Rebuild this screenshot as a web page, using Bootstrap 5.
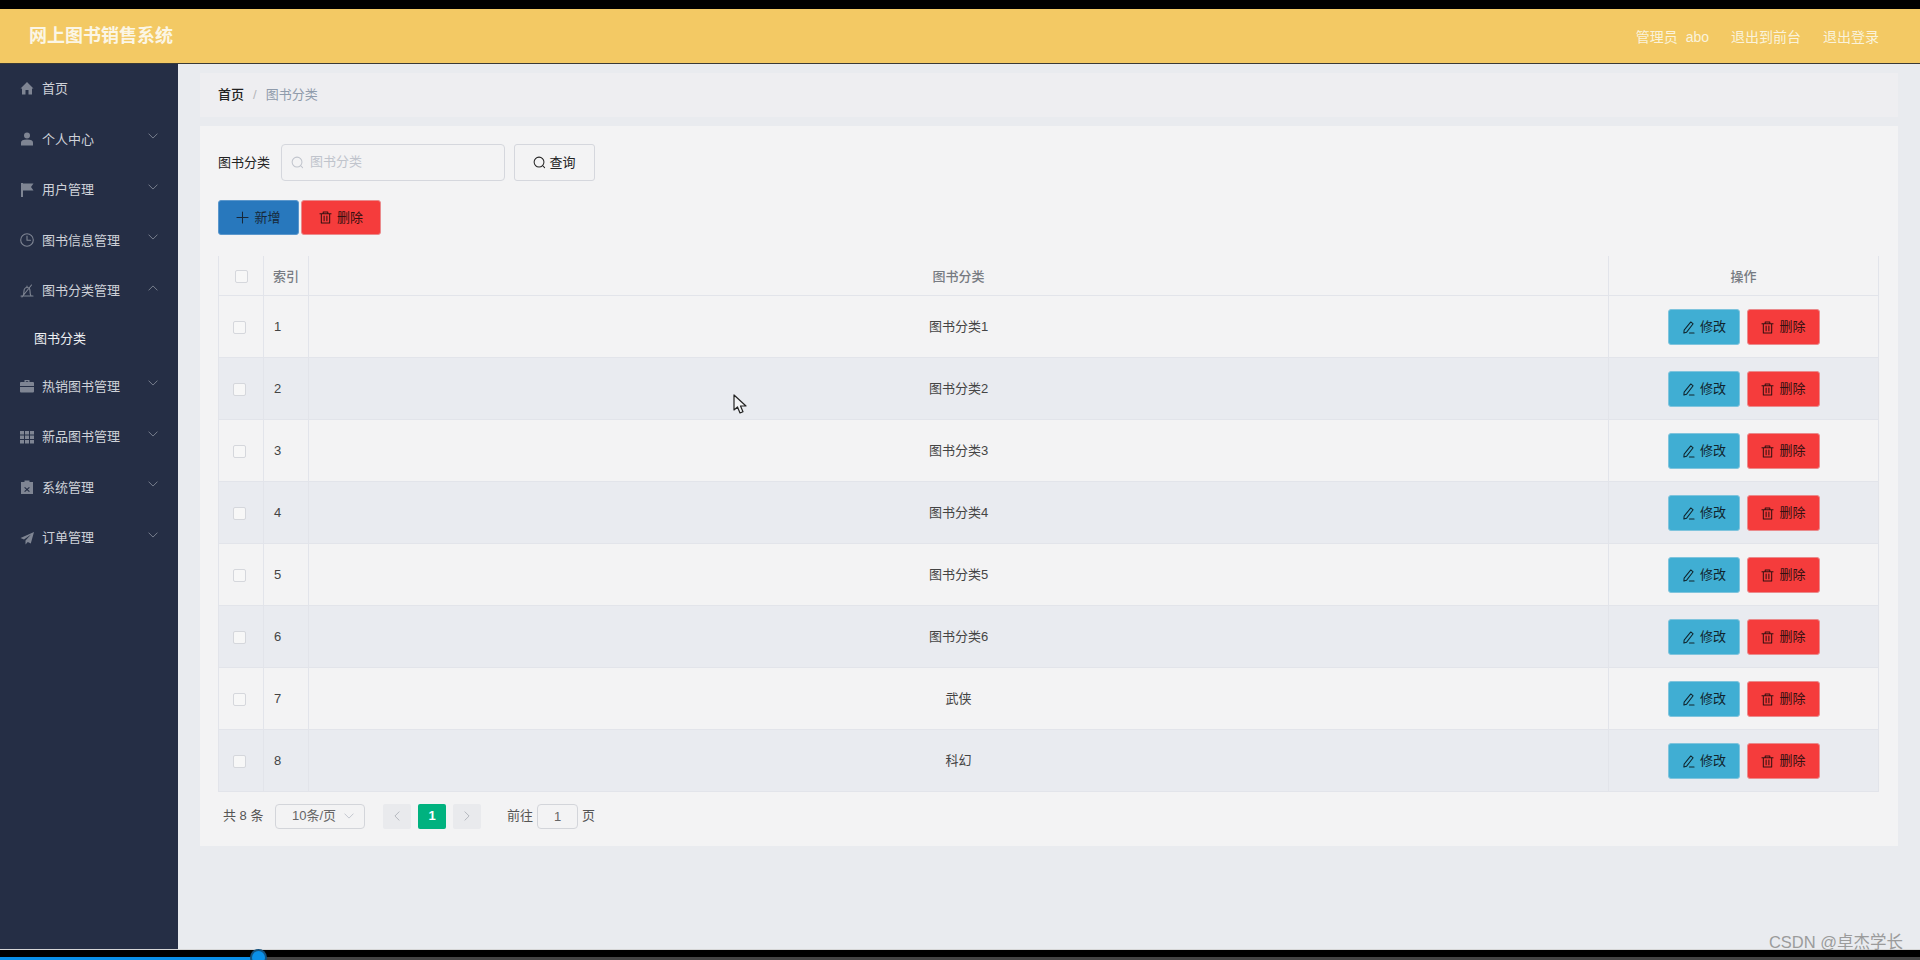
<!DOCTYPE html>
<html lang="zh">

<head>
    <meta charset="UTF-8" />
    <meta name="viewport" content="width=device-width, initial-scale=1" />
    <title>网上图书销售系统</title>
    <link href="https://cdn.jsdelivr.net/npm/bootstrap@5.3.2/dist/css/bootstrap.min.css" rel="stylesheet" />
    <style>
        html, body { height: 960px; overflow: hidden; }
        body { background: #000; font-family: "Liberation Sans", "Noto Sans CJK SC", sans-serif; font-size: 13px; color: #333; position: relative; }
        .ico { width: 14px; height: 14px; fill: currentColor; flex: none; }
        .ico-line { fill: none; stroke: currentColor; stroke-width: 1.1; stroke-linecap: round; stroke-linejoin: round; }

        .top-gap { height: 9px; }
        .app-head { height: 55px; background: #f3c964; border-bottom: 1px solid #3a3a36; padding: 0 41px 0 29px; }
        .app-title { font-size: 18px; font-weight: 700; color: #fbf6e6; line-height: 1; }
        .head-link { font-size: 14px; color: #faf3dc; margin-left: 22px; margin-top: 2px; }
        .head-user { word-spacing: 4px; }

        .app-body { height: 886px; background: #e9ebef; border-bottom: 1px solid #d6d6d6; }
        .side { width: 178px; background: #252e45; color: #cfd2d9; flex: none; }
        .side-item { height: 50.5px; padding: 0 20px; font-size: 13px; }
        .side-item .ico { color: #7f8593; margin-right: 8px; }
        .side-item .arrow { width: 10px; height: 10px; margin: 0 0 6px auto; color: #7f8593; }
        .side-first { height: 48.5px; margin-bottom: 1.5px; }
        .side-sub { height: 45px; padding-left: 34px; color: #eef0f3; font-size: 13px; }

        .main-area { padding: 9px 22px 0 22px; min-width: 0; }
        .crumb-box { height: 44px; background: #eeeef1; padding: 0 18px; margin-bottom: 9px; }
        .crumb-box .breadcrumb { --bs-breadcrumb-divider-color: #b4b6ba; --bs-breadcrumb-item-padding-x: 9px; font-size: 13px; }
        .crumb-box .breadcrumb-item { color: #222; font-weight: 500; }
        .crumb-box .breadcrumb-item.active { color: #8f9bab; font-weight: 400; }

        .panel { height: 720px; background: #f3f3f4; padding: 18px 19px 18px 18px; }
        .search-label { color: #222; width: 63px; }
        .search-wrap { width: 224px; height: 37px; border: 1px solid #d5d7dd; border-radius: 4px; padding: 0 9px 1px; }
        .search-wrap .ico { color: #c0c4cc; width: 13px; height: 13px; margin-right: 6px; }
        .search-wrap input { border: 0; background: transparent; outline: 0; width: 150px; font-size: 13px; padding: 0; }
        .search-wrap input::placeholder { color: #c0c4cc; }
        .btn-ui { --bs-btn-font-size: 13px; --bs-btn-border-radius: 3px; --bs-btn-padding-x: 0; --bs-btn-padding-y: 0; color: #222; display: inline-flex; align-items: center; justify-content: center; gap: 5px; border: 1px solid #d5d7dd; }
        .btn-ui .ico { width: 13px; height: 13px; }
        .btn-query { width: 81px; height: 37px; margin-left: 9px; gap: 3px; background: transparent; color: #222; }
        .tool-row { margin-top: 19px; gap: 2px; }
        .btn-add { width: 81px; height: 35px; background: #2878bd; border-color: #5b97cc; color: #17283a; }
        .btn-del { background: #f53c3c; border-color: #ea8a8c; color: #331010; height: 35px; }
        .tool-row .btn-del { width: 80px; }
        .btn-edit { background: #40aed3; border-color: #7fc4dd; color: #10242c; width: 72px; height: 36px; }
        .cell-inner .btn-del { width: 73px; height: 36px; }

        .grid-wrap { margin-top: 21px; }
        .grid { table-layout: fixed; width: 1661px; margin: 0; --bs-table-bg: transparent; --bs-table-border-color: #e2e4ea; border-collapse: collapse; font-size: 13px; color: #444; }
        .grid th, .grid td { border: 1px solid #e2e4ea; padding: 2px 0 0; vertical-align: middle; }
        .grid thead th { height: 39px; border-top: 0; color: #777b82; font-weight: 500; }
        .grid tbody td { height: 62px; }
        .grid tbody tr:nth-child(even) td { background: #e9ebf0; }
        .grid td.idx { padding-left: 10px; }
        .grid th.idx { padding-left: 9px; }
        .grid .form-check-input { width: 13px; height: 13px; margin: 0 0 0 14px; border-color: #d5d7dc; border-radius: 2px; background-color: #f7f7f7; display: block; }
        .grid thead .form-check-input { margin-left: 16px; }
        .cell-inner { gap: 7px; margin-left: 59px; }

        .pager { margin-top: 12px; height: 25px; color: #555; font-size: 13px; }
        .pager-total { margin-left: 5px; width: 52px; }
        .pager-select { width: 90px; height: 25px; border: 1px solid #d3d5da; border-radius: 4px; padding: 0 10px 0 16px; font-size: 13px; color: #666; }
        .pager-select .ico { width: 10px; height: 10px; color: #c0c4cc; margin-left: auto; }
        .pager .pagination { --bs-pagination-padding-x: 0; --bs-pagination-padding-y: 0; --bs-pagination-font-size: 13px; margin: 0 0 0 18px; gap: 8px; }
        .pager .page-link { width: 28px; height: 25px; display: flex; align-items: center; justify-content: center; border: 0; border-radius: 2px !important; background: #e9eaed; color: #b0b3ba; }
        .pager .page-link .ico { width: 10px; height: 10px; }
        .pager .active .page-link { background: #00b27f; color: #fff; font-weight: 700; }
        .pager-jump { margin-left: 26px; gap: 4px; }
        .pager-jump input { width: 41px; height: 25px; border: 1px solid #d3d5da; border-radius: 4px; background: transparent; text-align: center; font-size: 13px; color: #666; padding: 0; }

        .mouse-cursor { position: absolute; left: 733px; top: 394px; width: 14px; height: 21px; }
        .watermark { position: absolute; right: 17px; top: 932px; font-size: 16.5px; line-height: 20px; color: #9b9b9b; }
        .play-track { position: absolute; left: 0; right: 0; bottom: 0; height: 3px; background: #444; }
        .play-done { height: 3px; width: 258px; background: #0a8fe8; }
        .play-knob { position: absolute; left: 252px; top: 951px; width: 13px; height: 13px; border-radius: 50%; background: #0a8fe8; box-shadow: 0 0 0 2px #14527f; }
    </style>
</head>

<body>
    <svg class="d-none">
        <symbol id="i-home" viewBox="0 0 14 14"><path d="M7 1 13.500 7.500H12V13.500H8.500V9h-3v4.500H2V7.500H.5Z" /></symbol>
        <symbol id="i-user" viewBox="0 0 14 14"><circle cx="7" cy="3.500" r="3" /><path d="M1 13.500v-3C1 8.500 3 7.500 7 7.500s6 1 6 3v3Z" /></symbol>
        <symbol id="i-flag" viewBox="0 0 14 14"><path d="M1 0h2v14H1ZM3 .5h10.500L11 4l2.500 3.500H3Z" /></symbol>
        <symbol id="i-clock" viewBox="0 0 14 14"><g class="ico-line"><circle cx="7" cy="7" r="6.300" /><path d="M7 3v4.300h3.500" /></g></symbol>
        <symbol id="i-bell" viewBox="0 0 14 14"><g class="ico-line"><path d="M1 12h12M3 12c1-2 1-3.500 1-5 0-2 1.300-3.500 3-3.500S10 5 10 7c0 1.500 0 3 1 5M7 3.500V2M2 13 11.500 1" /></g></symbol>
        <symbol id="i-case" viewBox="0 0 14 14"><path d="M4.500 3V1h5v2H13a1 1 0 0 1 1 1v3H0V4a1 1 0 0 1 1-1ZM5.800 2.200V3h2.400v-.8ZM0 8h14v4.500a1 1 0 0 1-1 1H1a1 1 0 0 1-1-1Z" /></symbol>
        <symbol id="i-grid" viewBox="0 0 14 14"><path d="M0 1h4v3.500H0ZM5 1h4v3.500H5ZM10 1h4v3.500h-4ZM0 5.500h4V9H0ZM5 5.500h4V9H5ZM10 5.500h4V9h-4ZM0 10h4v3.500H0ZM5 10h4v3.500H5ZM10 10h4v3.500h-4Z" /></symbol>
        <symbol id="i-clip" viewBox="0 0 14 14"><path fill-rule="evenodd" d="M4.500 2V.5h5V2H13v12H1V2ZM5 7l-.8.800L6.200 9.500l-2 1.800.8.700 2-1.800 2 1.800.8-.7-2-1.800 2-1.700L9 7 7 8.800Z" /></symbol>
        <symbol id="i-plane" viewBox="0 0 14 14"><path d="M14 1 .5 7 4 8.600 11 3.500 5.500 9.500v4L7.800 11l3 1.500Z" /></symbol>
        <symbol id="i-down" viewBox="0 0 12 12"><path class="ico-line" d="M1 3.500 6 8.500 11 3.500" /></symbol>
        <symbol id="i-up" viewBox="0 0 12 12"><path class="ico-line" d="M1 8.500 6 3.500 11 8.500" /></symbol>
        <symbol id="i-left" viewBox="0 0 12 12"><path class="ico-line" d="M8.500 1 3.500 6 8.500 11" /></symbol>
        <symbol id="i-right" viewBox="0 0 12 12"><path class="ico-line" d="M3.500 1 8.500 6 3.500 11" /></symbol>
        <symbol id="i-search" viewBox="0 0 14 14"><g class="ico-line"><circle cx="6.500" cy="6.500" r="5.300" /><path d="M10.500 10.500 12.500 12.500" /></g></symbol>
        <symbol id="i-plus" viewBox="0 0 14 14"><path class="ico-line" d="M7 1v12M1 7h12" /></symbol>
        <symbol id="i-trash" viewBox="0 0 14 14"><g class="ico-line"><path d="M1 3h12M4.500 3V1h5v2M2.500 3v10h9V3M5.500 5.500v5M8.500 5.500v5" /></g></symbol>
        <symbol id="i-edit" viewBox="0 0 14 14"><g class="ico-line"><path d="M9.500 1 12 3 5 12l-3 1 .3-3.200ZM8 13h5" /></g></symbol>
    </svg>

    <div class="top-gap"></div>
    <nav class="navbar app-head d-flex justify-content-between align-items-center flex-nowrap">
        <span class="app-title">网上图书销售系统</span>
        <div class="d-flex align-items-center">
            <span class="head-link head-user">管理员 abo</span>
            <span class="head-link">退出到前台</span>
            <span class="head-link">退出登录</span>
        </div>
    </nav>

    <div class="app-body d-flex">
        <aside class="side" id="side"></aside>
        <main class="main-area flex-grow-1">
            <div class="crumb-box d-flex align-items-center">
                <ol class="breadcrumb mb-0">
                    <li class="breadcrumb-item">首页</li>
                    <li class="breadcrumb-item active">图书分类</li>
                </ol>
            </div>
            <section class="panel">
                <div class="d-flex align-items-center">
                    <span class="search-label">图书分类</span>
                    <div class="search-wrap d-flex align-items-center">
                        <svg class="ico"><use href="#i-search" /></svg>
                        <input type="text" placeholder="图书分类" />
                    </div>
                    <button class="btn btn-ui btn-query"><svg class="ico"><use href="#i-search" /></svg>查询</button>
                </div>
                <div class="tool-row d-flex">
                    <button class="btn btn-ui btn-add"><svg class="ico"><use href="#i-plus" /></svg>新增</button>
                    <button class="btn btn-ui btn-del"><svg class="ico"><use href="#i-trash" /></svg>删除</button>
                </div>
                <div class="grid-wrap">
                    <table class="table grid">
                        <colgroup>
                            <col style="width:45px" />
                            <col style="width:45px" />
                            <col />
                            <col style="width:270px" />
                        </colgroup>
                        <thead>
                            <tr>
                                <th><input class="form-check-input" type="checkbox" /></th>
                                <th class="idx">索引</th>
                                <th class="text-center">图书分类</th>
                                <th class="text-center">操作</th>
                            </tr>
                        </thead>
                        <tbody id="rows"></tbody>
                    </table>
                </div>
                <div class="pager d-flex align-items-center">
                    <span class="pager-total">共 8 条</span>
                    <div class="pager-select d-flex align-items-center">10条/页<svg class="ico"><use href="#i-down" /></svg></div>
                    <ul class="pagination">
                        <li class="page-item"><span class="page-link"><svg class="ico"><use href="#i-left" /></svg></span></li>
                        <li class="page-item active"><span class="page-link">1</span></li>
                        <li class="page-item"><span class="page-link"><svg class="ico"><use href="#i-right" /></svg></span></li>
                    </ul>
                    <div class="pager-jump d-flex align-items-center">
                        <span>前往</span>
                        <input type="text" value="1" />
                        <span>页</span>
                    </div>
                </div>
            </section>
        </main>
    </div>

    <svg class="mouse-cursor" viewBox="0 0 14 21"><path d="M1 1v15l3.500-3 2.500 6 3-1.300-2.500-5.700H13Z" fill="#f2f3f5" stroke="#222" stroke-width="1.200" stroke-linejoin="round" /></svg>
    <div class="watermark">CSDN @卓杰学长</div>
    <div class="play-track"><div class="play-done"></div></div>
    <div class="play-knob"></div>

    <script>
        const menu = [
            ['i-home', '首页'],
            ['i-user', '个人中心', 'i-down'],
            ['i-flag', '用户管理', 'i-down'],
            ['i-clock', '图书信息管理', 'i-down'],
            ['i-bell', '图书分类管理', 'i-up'],
            [null, '图书分类'],
            ['i-case', '热销图书管理', 'i-down'],
            ['i-grid', '新品图书管理', 'i-down'],
            ['i-clip', '系统管理', 'i-down'],
            ['i-plane', '订单管理', 'i-down']
        ];
        document.getElementById('side').innerHTML = menu.map((m, i) => {
            if (!m[0]) return `<div class="side-sub d-flex align-items-center">${m[1]}</div>`;
            const arrow = m[2] ? `<svg class="ico arrow"><use href="#${m[2]}" /></svg>` : '';
            return `<div class="side-item d-flex align-items-center ${i === 0 ? 'side-first' : ''}"><svg class="ico"><use href="#${m[0]}" /></svg>${m[1]}${arrow}</div>`;
        }).join('');

        const names = ['图书分类1', '图书分类2', '图书分类3', '图书分类4', '图书分类5', '图书分类6', '武侠', '科幻'];
        document.getElementById('rows').innerHTML = names.map((n, i) => `
<tr>
<td><input class="form-check-input" type="checkbox" /></td>
<td class="idx">${i + 1}</td>
<td class="text-center">${n}</td>
<td><div class="d-flex cell-inner">
<button class="btn btn-ui btn-edit"><svg class="ico"><use href="#i-edit" /></svg>修改</button>
<button class="btn btn-ui btn-del"><svg class="ico"><use href="#i-trash" /></svg>删除</button>
</div></td>
</tr>`).join('');
    </script>
    <script src="https://cdn.jsdelivr.net/npm/bootstrap@5.3.2/dist/js/bootstrap.bundle.min.js"></script>
</body>

</html>
